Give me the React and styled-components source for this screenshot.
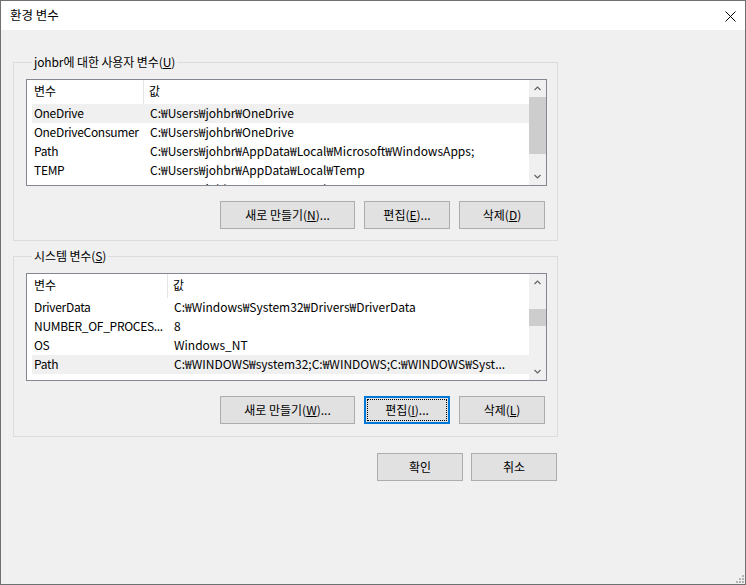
import React from 'react'
import styled, { createGlobalStyle } from 'styled-components'

const GlobalStyle = createGlobalStyle`
  html, body {
    margin: 0;
    padding: 0;
    background: #f0f0f0;
  }
  body {
    font-family: "Noto Sans CJK KR", "Noto Sans", sans-serif;
    font-size: 12px;
    color: #000;
  }
`

const Window = styled.div`
  position: relative;
  width: 746px;
  height: 585px;
  box-sizing: border-box;
  border: 1px solid #707070;
  background: #f0f0f0;
  display: flex;
  flex-direction: column;
  overflow: hidden;
`

const TopEdge = styled.div`
  position: absolute;
  top: -1px;
  left: 270px;
  width: 163px;
  height: 1px;
  background: #1f5a1f;
`

const TitleBar = styled.div`
  height: 29px;
  flex: none;
  background: #fff;
  display: flex;
  align-items: center;
  justify-content: space-between;
  padding-left: 9px;
`

const Title = styled.span`
  font-size: 12.5px;
  line-height: 16px;
  padding-bottom: 1px;
`

const CloseIcon = styled.svg`
  margin-right: 9px;
  margin-top: 1px;
`

const Body = styled.div`
  padding: 24px 0 0 12px;
  display: flex;
  flex-direction: column;
`

const GroupBox = styled.fieldset`
  width: 545px;
  box-sizing: border-box;
  margin: ${(p) => (p.$first ? '0 0 7px 0' : '0')};
  padding: 9px 10px ${(p) => p.$bottom}px 12px;
  border: 1px solid #dcdcdc;
  min-inline-size: 0;
`

const Legend = styled.legend`
  margin-left: 6px;
  padding: 0 2px;
  line-height: 16px;
  font-size: 12px;
  letter-spacing: -0.1px;
`

const Key = styled.u`
  text-decoration: underline;
  text-underline-offset: 1px;
`

const ListView = styled.div`
  height: ${(p) => p.$height}px;
  box-sizing: border-box;
  border: 1px solid #828790;
  background: #fff;
  display: flex;
  overflow: hidden;
`

const ListBody = styled.div`
  flex: 1;
  min-width: 0;
  display: flex;
  flex-direction: column;
  overflow: hidden;
`

const HeaderRow = styled.div`
  flex: none;
  height: 24px;
  display: grid;
  grid-template-columns: ${(p) => p.$nameWidth + 6}px 1fr;
`

const HeaderCell = styled.div`
  display: flex;
  align-items: center;
  padding: 0 0 3px ${(p) => (p.$first ? 7 : 5)}px;
  box-sizing: border-box;
  border-right: ${(p) => (p.$first ? '1px solid #e5e5e5' : 'none')};
`

const Row = styled.div`
  flex: none;
  height: 19px;
  margin-left: 5px;
  display: grid;
  grid-template-columns: ${(p) => p.$nameWidth}px 1fr;
  align-items: center;
  background: ${(p) => (p.$selected ? '#f0f0f0' : 'transparent')};
`

const Cell = styled.div`
  white-space: nowrap;
  overflow: hidden;
  line-height: 17px;
  padding: 0 0 2px ${(p) => (p.$value ? 7 : 2)}px;
  letter-spacing: ${(p) => (p.$value ? '0' : '-0.3px')};
`

const ScrollBar = styled.div`
  flex: none;
  width: 17px;
  background: #f0f0f0;
  display: flex;
  flex-direction: column;
`

const ScrollArrow = styled.div`
  flex: none;
  height: 17px;
  display: flex;
  align-items: center;
  justify-content: center;
`

const Track = styled.div`
  flex: 1;
  display: flex;
  flex-direction: column;
`

const Thumb = styled.div`
  margin-top: ${(p) => p.$top}px;
  height: ${(p) => p.$size}px;
  background: #cdcdcd;
`

const ButtonRow = styled.div`
  display: flex;
  justify-content: flex-end;
  gap: ${(p) => p.$gap || 9}px;
  margin-top: ${(p) => p.$top || 15}px;
  padding-right: ${(p) => p.$right || 0}px;
`

const FooterRow = styled(ButtonRow)`
  width: 545px;
  box-sizing: border-box;
`

const Button = styled.button`
  position: relative;
  width: ${(p) => p.$width || 86}px;
  height: 28px;
  box-sizing: border-box;
  padding: 0 0 1px;
  font-family: inherit;
  font-size: 12px;
  color: #000;
  background: #e1e1e1;
  border: ${(p) => (p.$focused ? '2px solid #0078d7' : '1px solid #adadad')};
  display: flex;
  align-items: center;
  justify-content: center;

  &::after {
    content: '';
    display: ${(p) => (p.$focused ? 'block' : 'none')};
    position: absolute;
    inset: 1px;
    border: 1px dotted #000;
  }
`

const Grip = styled.svg`
  position: absolute;
  right: 1px;
  bottom: 1px;
`

function Chevron({ down }) {
  return (
    <svg width="7" height="5" viewBox="0 0 7 5">
      <polyline
        points={down ? '0.5,1 3.5,4 6.5,1' : '0.5,4 3.5,1 6.5,4'}
        fill="none"
        stroke="#606060"
        strokeWidth="1.1"
      />
    </svg>
  )
}

function VarList({ height, nameWidth, rows, thumbTop, thumbSize }) {
  return (
    <ListView $height={height}>
      <ListBody>
        <HeaderRow $nameWidth={nameWidth}>
          <HeaderCell $first>변수</HeaderCell>
          <HeaderCell>값</HeaderCell>
        </HeaderRow>
        {rows.map(([name, value, selected]) => (
          <Row key={name} $nameWidth={nameWidth} $selected={selected}>
            <Cell>{name}</Cell>
            <Cell $value>{value}</Cell>
          </Row>
        ))}
      </ListBody>
      <ScrollBar>
        <ScrollArrow>
          <Chevron />
        </ScrollArrow>
        <Track>
          <Thumb $top={thumbTop} $size={thumbSize} />
        </Track>
        <ScrollArrow>
          <Chevron down />
        </ScrollArrow>
      </ScrollBar>
    </ListView>
  )
}

const userVars = [
  ['OneDrive', 'C:₩Users₩johbr₩OneDrive', true],
  ['OneDriveConsumer', 'C:₩Users₩johbr₩OneDrive'],
  ['Path', 'C:₩Users₩johbr₩AppData₩Local₩Microsoft₩WindowsApps;'],
  ['TEMP', 'C:₩Users₩johbr₩AppData₩Local₩Temp'],
  ['TMP', 'C:₩Users₩johbr₩AppData₩Local₩Temp'],
]

const systemVars = [
  ['DriverData', 'C:₩Windows₩System32₩Drivers₩DriverData'],
  ['NUMBER_OF_PROCES...', '8'],
  ['OS', 'Windows_NT'],
  ['Path', 'C:₩WINDOWS₩system32;C:₩WINDOWS;C:₩WINDOWS₩Syst...', true],
]

export default function App() {
  return (
    <>
      <GlobalStyle />
      <Window>
        <TopEdge />
        <TitleBar>
          <Title>환경 변수</Title>
          <CloseIcon width="11" height="11" viewBox="0 0 11 11">
            <path d="M0.5 0.5 L10.5 10.5 M10.5 0.5 L0.5 10.5" stroke="#000" strokeWidth="1" />
          </CloseIcon>
        </TitleBar>
        <Body>
          <GroupBox $first $bottom={11}>
            <Legend>
              johbr에 대한 사용자 변수(<Key>U</Key>)
            </Legend>
            <VarList height={107} nameWidth={111} rows={userVars} thumbTop={0} thumbSize={57} />
            <ButtonRow $right={2}>
              <Button $width={135}>
                새로 만들기(<Key>N</Key>)...
              </Button>
              <Button>
                편집(<Key>E</Key>)...
              </Button>
              <Button>
                삭제(<Key>D</Key>)
              </Button>
            </ButtonRow>
          </GroupBox>
          <GroupBox $bottom={12}>
            <Legend>
              시스템 변수(<Key>S</Key>)
            </Legend>
            <VarList height={108} nameWidth={135} rows={systemVars} thumbTop={18} thumbSize={17} />
            <ButtonRow $right={2}>
              <Button $width={135}>
                새로 만들기(<Key>W</Key>)...
              </Button>
              <Button $focused>
                편집(<Key>I</Key>)...
              </Button>
              <Button>
                삭제(<Key>L</Key>)
              </Button>
            </ButtonRow>
          </GroupBox>
          <FooterRow $top={16} $gap={8} $right={1}>
            <Button>확인</Button>
            <Button>취소</Button>
          </FooterRow>
        </Body>
        <Grip width="8" height="8" viewBox="0 0 8 8">
          <rect x="0" y="6" width="2" height="2" fill="#b4b4b4" />
          <rect x="3" y="6" width="2" height="2" fill="#b4b4b4" />
          <rect x="6" y="6" width="2" height="2" fill="#b4b4b4" />
          <rect x="3" y="3" width="2" height="2" fill="#b4b4b4" />
          <rect x="6" y="3" width="2" height="2" fill="#b4b4b4" />
          <rect x="6" y="0" width="2" height="2" fill="#b4b4b4" />
        </Grip>
      </Window>
    </>
  )
}
